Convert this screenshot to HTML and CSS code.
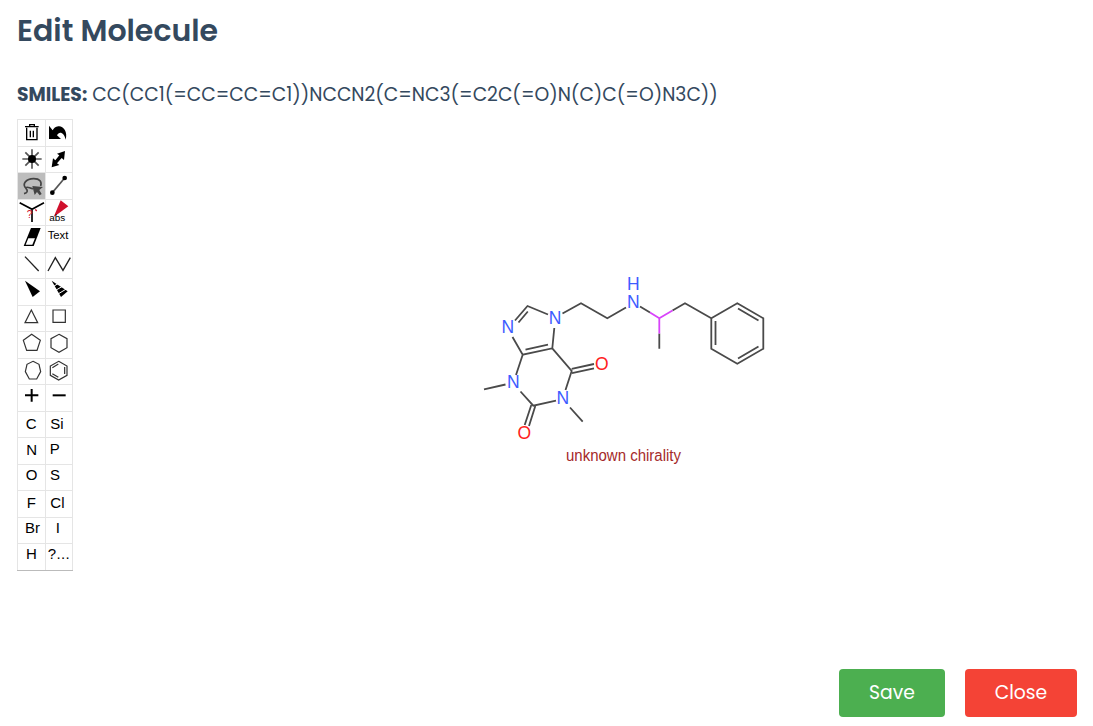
FILE: index.html
```
<!DOCTYPE html>
<html lang="en">
<head>
    <meta charset="UTF-8">
    <title>Edit Molecule</title>
    <link rel="stylesheet" href="styles.css">
</head>
<body>
<div class="editor">
    <h1 class="title">Edit Molecule</h1>
    <p class="smiles"><strong>SMILES:</strong> <span class="formula">CC(CC1(=CC=CC=C1))NCCN2(C=NC3(=C2C(=O)N(C)C(=O)N3C))</span></p>
    <div class="workspace">
        <div class="toolbar">
            <div class="tool"><svg viewBox="0 0 84 80"><path class="line trash" d="M24 23H65M38 22V17H52V22M29 26V62H60V26M40 35V55M49 35V55"/></svg></div>
            <div class="tool"><svg viewBox="0 0 84 80"><path d="M12 20V60H48L36 49C43 34 58 42 62 62C69 38 54 20 40 22C31 23 27 28 23 34Z"/></svg></div>
            <div class="tool"><svg viewBox="0 0 84 80"><path class="line gray" d="M45 10V68M16 39H74M25 19L65 59M65 19L25 59"/><circle cx="45" cy="39" r="12"/></svg></div>
            <div class="tool"><svg viewBox="0 0 84 80"><path d="M60 15L57 42L50 36L36 52L43 57L20 64L24 37L31 43L43 28L36 23Z"/></svg></div>
            <div class="tool active"><svg viewBox="0 0 84 80"><path class="line lasso" d="M21 65C31 63 34 57 27 49C14 36 27 20 50 20C69 20 75 30 71 42M26 47C34 42 39 51 48 50"/><path class="dark" d="M46 42L78 45L67 54L74 66L68 70L60 60L53 69Z"/></svg></div>
            <div class="tool"><svg viewBox="0 0 84 80"><path class="line gray" d="M22 62L59 18"/><circle cx="22" cy="62" r="7"/><circle cx="59" cy="18" r="7"/></svg></div>
            <div class="tool"><svg viewBox="0 0 84 80"><path class="line bold" d="M8 11L45 31L81 11M45 31V69"/><text class="mark" x="29" y="56">?</text><path class="line red" d="M55 31L59 36"/></svg></div>
            <div class="tool"><svg viewBox="0 0 84 80"><path class="fill-red" d="M47 4L70 22L26 54Z"/><text class="abs" x="13" y="66" textLength="48" lengthAdjust="spacingAndGlyphs">abs</text></svg></div>
            <div class="tool"><svg viewBox="0 0 84 80"><path d="M42 9H71L50 63H20Z"/><path class="white" d="M34 40H54L46 59H26Z"/></svg></div>
            <div class="tool"><svg viewBox="0 0 84 80"><text class="word" x="8" y="42" textLength="62">Text</text></svg></div>
            <div class="tool"><svg viewBox="0 0 84 80"><path class="line" d="M24 14L65 57"/></svg></div>
            <div class="tool"><svg viewBox="0 0 84 80"><path class="line" d="M9 57L31 17L54 55L76 17"/></svg></div>
            <div class="tool"><svg viewBox="0 0 84 80"><path d="M24 8L69 40L47 57Z"/></svg></div>
            <div class="tool"><svg viewBox="0 0 84 80"><path d="M20 8L68 40L48 57Z"/><path class="line stripe" d="M26 25L42 15M32 37L54 24M39 48L64 33"/></svg></div>
            <div class="tool"><svg viewBox="0 0 84 80"><path class="line thin" d="M43 15L62 53H24Z"/></svg></div>
            <div class="tool"><svg viewBox="0 0 84 80"><path class="line thin" d="M24 15H61V52H24Z"/></svg></div>
            <div class="tool"><svg viewBox="0 0 84 80"><path class="line thin" d="M44 10L70 28L60 58H29L19 28Z"/></svg></div>
            <div class="tool"><svg viewBox="0 0 84 80"><path class="line thin" d="M42 10L66 23V50L42 64L18 50V23Z"/></svg></div>
            <div class="tool"><svg viewBox="0 0 84 80"><path class="line thin" d="M48 10L66 19L71 41L59 63H37L25 41L30 19Z"/></svg></div>
            <div class="tool"><svg viewBox="0 0 84 80"><path class="line thin" d="M41 10L66 24V52L41 66L16 52V24ZM40 18L22 29M22 47L40 58M59 27V48"/></svg></div>
            <div class="tool"><svg viewBox="0 0 84 80"><path class="line heavy" d="M24 34H64M44 15V53"/></svg></div>
            <div class="tool"><svg viewBox="0 0 84 80"><path class="line heavy" d="M23 34H62"/></svg></div>
            <div class="tool"><svg viewBox="0 0 84 80"><text x="26" y="53">C</text></svg></div>
            <div class="tool"><svg viewBox="0 0 84 80"><text x="16" y="53">Si</text></svg></div>
            <div class="tool"><svg viewBox="0 0 84 80"><text x="28" y="53">N</text></svg></div>
            <div class="tool"><svg viewBox="0 0 84 80"><text x="14" y="52">P</text></svg></div>
            <div class="tool"><svg viewBox="0 0 84 80"><text x="26" y="49">O</text></svg></div>
            <div class="tool"><svg viewBox="0 0 84 80"><text x="15" y="49">S</text></svg></div>
            <div class="tool"><svg viewBox="0 0 84 80"><text x="29" y="53">F</text></svg></div>
            <div class="tool"><svg viewBox="0 0 84 80"><text x="16" y="53">Cl</text></svg></div>
            <div class="tool"><svg viewBox="0 0 84 80"><text x="24" y="48">Br</text></svg></div>
            <div class="tool"><svg viewBox="0 0 84 80"><text x="32" y="48">I</text></svg></div>
            <div class="tool"><svg viewBox="0 0 84 80"><text x="27" y="48">H</text></svg></div>
            <div class="tool"><svg viewBox="0 0 84 80"><text x="8" y="48" textLength="66">?...</text></svg></div>
        </div>
        <svg class="canvas" viewBox="473 270 300 200">
            <!-- xanthine rings -->
            <path class="bond" d="M548 314.5L527.5 306L515 320.5M527.8 311.5L518.5 322.5M512.5 337L522.7 354.7L552.3 348.3L554.3 328M525.5 349.7L548 344.7M522.7 354.7L516 375M552.3 348.3L571.7 371L565.5 390M520.5 391.5L533.3 405.7L556 400.7M505.5 384.5L484 389.3M570 407.5L582.7 421.7"/>
            <path class="bond" d="M571.7 368.8L594 364M572 373.2L594 368.4M531.3 405L524.7 425M535.3 406L529 426"/>
            <!-- side chain and phenyl ring -->
            <path class="bond" d="M562.5 313.5L581 303.3L607.3 318.3L626 307.5M640 306.5L650 312.5M672.5 310.5L685 303.3L711.3 318.3L737.3 303.3L763.3 318.3V348.7L737.3 363.7L711.3 348.7V318.3M659.3 333.5V348.7M715.5 321V345M738 308.5L758.5 320.5M738 358.5L758.5 346.5"/>
            <path class="bond chiral" d="M650 312.5L659.3 318.3L672.5 310.5M659.3 318.3V333.5"/>
            <g class="nitrogen">
                <text x="555" y="323.6">N</text>
                <text x="507.7" y="333.4">N</text>
                <text x="513.2" y="388.4">N</text>
                <text x="562.7" y="404.4">N</text>
                <text x="633.2" y="308.4">N</text>
                <text x="633.2" y="290.4">H</text>
            </g>
            <g class="oxygen">
                <text x="601.7" y="369.7">O</text>
                <text x="524.3" y="438.5">O</text>
            </g>
            <text class="note" x="623.5" y="461" textLength="115" lengthAdjust="spacingAndGlyphs">unknown chirality</text>
        </svg>
    </div>
    <div class="actions">
        <button class="button save">Save</button>
        <button class="button close">Close</button>
    </div>
</div>
</body>
</html>
```
FILE: styles.css
```
body {
    margin: 0;
    background-color: white;
    color: #34495e;
    font-family: Poppins, Inter, sans-serif;
}
.editor {
    box-sizing: border-box;
    height: 726px;
    padding: 8px 16px 9px 17px;
    display: flex;
    flex-direction: column;
}
.title {
    margin: 0;
    font-size: 30px;
    line-height: 45px;
    font-weight: 600;
}
.smiles {
    margin: 27px 0 10px;
    font-size: 18.75px;
    line-height: 29px;
    white-space: nowrap;
}
.smiles strong {
    font-weight: 700;
}
.workspace {
    display: flex;
    align-items: flex-start;
    flex: 1;
}
.toolbar {
    display: grid;
    grid-template-columns: 28px 28px;
    grid-auto-rows: 26.5px;
    border-bottom: 1px solid #bbb;
    font-family: "Liberation Sans", sans-serif;
}
.tool {
    box-sizing: border-box;
    border-top: 1px solid #e5e5e5;
    border-left: 1px solid #e5e5e5;
}
.tool:nth-child(even) {
    border-right: 1px solid #e5e5e5;
}
.tool svg {
    display: block;
    width: 28px;
    height: 26.67px;
    margin: -1px 0 0 -1px;
}
.tool text {
    font-size: 45px;
}
.tool .word {
    font-size: 34px;
}
.tool .abs {
    font-size: 25px;
}
.tool .mark {
    font-size: 30px;
    fill: #d0102c;
}
.active {
    background-color: #bdbdbd;
}
.line {
    fill: none;
    stroke: #222;
    stroke-width: 4;
}
.thin {
    stroke: #333;
    stroke-width: 3.6;
}
.trash {
    stroke: black;
}
.gray {
    stroke: #555;
    stroke-width: 5;
}
.lasso {
    stroke: #444;
    stroke-width: 5;
}
.bold {
    stroke: black;
    stroke-width: 5;
}
.heavy {
    stroke: black;
    stroke-width: 6;
}
.red {
    stroke: #d0102c;
}
.stripe {
    stroke: white;
    stroke-width: 3;
}
.dark {
    fill: #444;
}
.white {
    fill: white;
}
.fill-red {
    fill: #d0102c;
}
.canvas {
    width: 300px;
    height: 200px;
    margin: 151px 0 0 400px;
    font-family: "Liberation Sans", sans-serif;
    font-size: 17.5px;
    text-anchor: middle;
}
.bond {
    fill: none;
    stroke: #4a4a4a;
    stroke-width: 1.8;
}
.chiral {
    stroke: #d844fa;
}
.nitrogen {
    fill: #3d5cff;
}
.oxygen {
    fill: #ff2020;
}
.note {
    font-size: 16px;
    fill: #a52a2a;
}
.actions {
    display: flex;
    justify-content: flex-end;
    gap: 20px;
}
.button {
    width: 106px;
    height: 48px;
    padding: 0 0 2px;
    border: none;
    border-radius: 4px;
    color: white;
    font-family: inherit;
    font-size: 18.75px;
    font-weight: 400;
}
.save {
    background-color: #4caf50;
}
.close {
    width: 112px;
    background-color: #f44336;
}
```
